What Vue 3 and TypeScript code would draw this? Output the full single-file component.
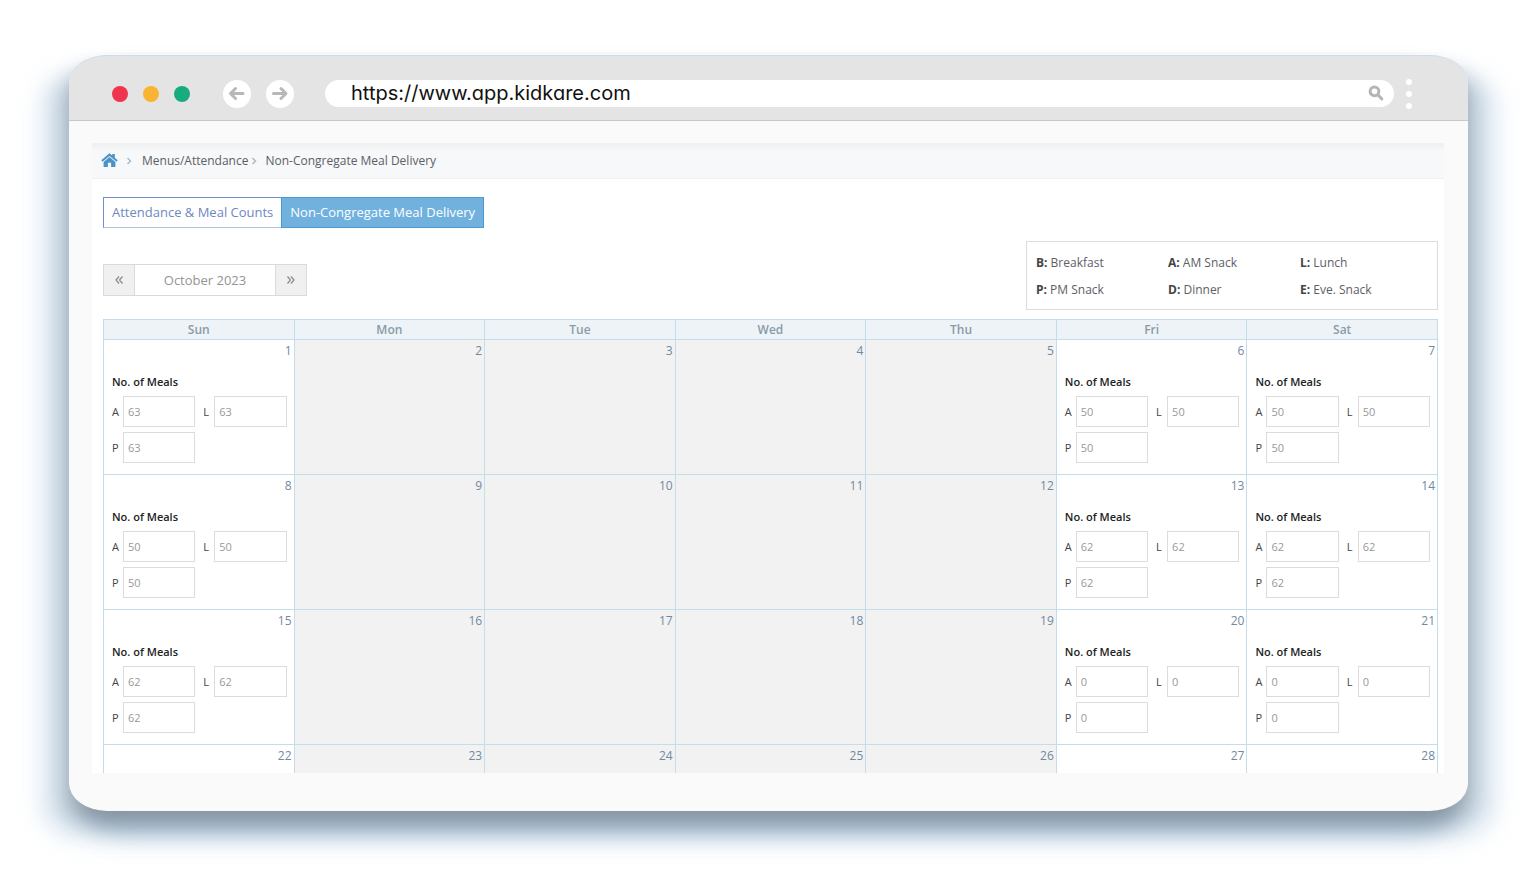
<script setup lang="ts">
import { ref } from 'vue'

interface Field {
  code: string
  value: string
}

interface Day {
  date: number
  closed: boolean
  fields: Field[]
}

const weekdays = ['Sun', 'Mon', 'Tue', 'Wed', 'Thu', 'Fri', 'Sat']

const legend = [
  { code: 'B:', name: 'Breakfast' },
  { code: 'A:', name: 'AM Snack' },
  { code: 'L:', name: 'Lunch' },
  { code: 'P:', name: 'PM Snack' },
  { code: 'D:', name: 'Dinner' },
  { code: 'E:', name: 'Eve. Snack' },
]

const counts: Record<number, string> = {
  1: '63', 6: '50', 7: '50',
  8: '50', 13: '62', 14: '62',
  15: '62', 20: '0', 21: '0',
}

const weeks = ref<Day[][]>(
  [1, 8, 15, 22].map((start) =>
    weekdays.map((_, i) => {
      const date = start + i
      const count = counts[date]
      return {
        date,
        closed: i > 0 && i < 5,
        fields: count === undefined ? [] : ['A', 'L', 'P'].map((code) => ({ code, value: count })),
      }
    }),
  ),
)

const address = ref('https://www.app.kidkare.com')
</script>

<template>
  <div class="stage">
    <div class="window">
      <header class="chrome">
        <div class="lights">
          <span class="light red"></span>
          <span class="light amber"></span>
          <span class="light green"></span>
        </div>
        <div class="history">
          <button type="button" class="round" aria-label="Back">
            <svg viewBox="0 0 28 28" width="28" height="28"><path d="M20 13.500H8M12.500 8.500L7.500 13.500L12.500 18.500" /></svg>
          </button>
          <button type="button" class="round" aria-label="Forward">
            <svg viewBox="0 0 28 28" width="28" height="28"><path d="M7.500 13.500H19.500M15 8.500L20 13.500L15 18.500" /></svg>
          </button>
        </div>
        <div class="address">
          <input v-model="address" type="text" aria-label="Address" />
          <button type="button" class="search" aria-label="Search">
            <svg viewBox="0 0 18 18" width="18" height="18">
              <circle cx="7.500" cy="6.300" r="4.400" fill="none" stroke="#b5b5b5" stroke-width="3" />
              <path d="M11 10L14.800 13.900" stroke="#b5b5b5" stroke-width="3" stroke-linecap="round" />
            </svg>
          </button>
        </div>
        <button type="button" class="more" aria-label="More">
          <span></span><span></span><span></span>
        </button>
      </header>

      <main class="body">
        <div class="panel">
          <nav class="crumbs" aria-label="Breadcrumb">
            <a href="#" class="home" aria-label="Home">
              <svg viewBox="0 0 17 15" width="17" height="15">
                <path d="M0.300 7.300L8.500 0.300L11.200 2.500V1H13.800V4.700L16.700 7.300L15.500 8.800L8.500 3L1.500 8.800Z" />
                <path d="M2.600 8.900L8.500 4L14.400 8.900V14H10.100V9.800H6.900V14H2.600Z" />
              </svg>
            </a>
            <svg class="sep" viewBox="0 0 6 8" width="6" height="8"><path d="M1.500 1L4.500 4L1.500 7" /></svg>
            <a href="#" class="parent">Menus/Attendance</a>
            <svg class="sep" viewBox="0 0 6 8" width="6" height="8"><path d="M1.500 1L4.500 4L1.500 7" /></svg>
            <span class="current">Non-Congregate Meal Delivery</span>
          </nav>

          <div class="content">
            <div class="tabs">
              <button type="button" class="tab">Attendance &amp; Meal Counts</button>
              <button type="button" class="tab active">Non-Congregate Meal Delivery</button>
            </div>

            <div class="tools">
              <div class="month">
                <button type="button" aria-label="Previous month">
                  <svg viewBox="0 0 10 10" width="10" height="10"><path d="M5 1.500L2 5L5 8.500M8.500 1.500L5.500 5L8.500 8.500" /></svg>
                </button>
                <span>October 2023</span>
                <button type="button" aria-label="Next month">
                  <svg viewBox="0 0 10 10" width="10" height="10"><path d="M1.500 1.500L4.500 5L1.500 8.500M5 1.500L8 5L5 8.500" /></svg>
                </button>
              </div>
              <div class="legend">
                <span v-for="item in legend" :key="item.code"><b>{{ item.code }}</b> {{ item.name }}</span>
              </div>
            </div>

            <table class="calendar">
              <thead>
                <tr>
                  <th v-for="name in weekdays" :key="name" scope="col">{{ name }}</th>
                </tr>
              </thead>
              <tbody>
                <tr v-for="(week, w) in weeks" :key="w">
                  <td v-for="day in week" :key="day.date" :class="{ closed: day.closed }">
                    <div class="date">{{ day.date }}</div>
                    <div v-if="day.fields.length" class="meals">
                      <div class="title">No. of Meals</div>
                      <div class="fields">
                        <label v-for="field in day.fields" :key="field.code">
                          <span>{{ field.code }}</span>
                          <input v-model="field.value" type="text" inputmode="numeric" />
                        </label>
                      </div>
                    </div>
                  </td>
                </tr>
              </tbody>
            </table>
          </div>
        </div>
      </main>
    </div>
  </div>
</template>

<style>
body {
  margin: 0;
  background: #fff;
}
</style>

<style scoped>
.stage {
  padding: 55px 68px 81px 69px;
  overflow: hidden;
  font-family: "Open Sans", "Noto Sans", sans-serif;
  font-size: 12px;
  line-height: 18px;
  color: #5c6064;
}
.stage * {
  box-sizing: border-box;
}
button,
input {
  margin: 0;
  padding: 0;
  border: 0;
  background: none;
  font: inherit;
  color: inherit;
}
button {
  cursor: pointer;
}
svg {
  display: block;
}
.window {
  border-radius: 38px / 28px;
  background: #fafafa;
  box-shadow:
    0 14px 20px -2px rgba(85, 75, 90, 0.34),
    -14px 18px 20px 0 rgba(100, 140, 155, 0.26),
    14px 18px 20px 0 rgba(100, 140, 155, 0.26),
    -22px 22px 22px 8px rgba(150, 185, 220, 0.26),
    22px 22px 22px 8px rgba(150, 185, 220, 0.26);
}
.chrome {
  display: flex;
  align-items: center;
  height: 66px;
  padding: 11px 56px 0 43px;
  border-radius: 38px 38px 0 0 / 28px 28px 0 0;
  border-top: 1px solid #cddce7;
  border-bottom: 1px solid #c6c9cc;
  background: #e4e4e4;
}
.lights {
  display: flex;
  gap: 15px;
}
.light {
  width: 16px;
  height: 16px;
  border-radius: 50%;
}
.red { background: #f0344c; }
.amber { background: #f8b432; }
.green { background: #17ab80; }
.history {
  display: flex;
  gap: 15px;
  margin-left: 33px;
}
.round {
  width: 28px;
  height: 28px;
  border-radius: 50%;
  background: #fff;
}
.round path {
  fill: none;
  stroke: #b7b9b9;
  stroke-width: 3;
  stroke-linecap: round;
  stroke-linejoin: round;
}
.address {
  display: flex;
  flex: 1;
  align-items: center;
  height: 27px;
  margin-left: 31px;
  padding: 0 9px 0 26px;
  border-radius: 14px;
  background: #fff;
}
.address input {
  flex: 1;
  min-width: 0;
  height: 27px;
  padding-bottom: 2px;
  font-family: Inter, "Open Sans", sans-serif;
  font-size: 20px;
  font-weight: 400;
  font-feature-settings: "cv11";
  color: #111;
}
.more {
  display: flex;
  flex-direction: column;
  align-items: center;
  gap: 6px;
  width: 6px;
  margin-left: 12px;
}
.more span {
  width: 6px;
  height: 6px;
  border-radius: 50%;
  background: #fff;
}
.body {
  padding: 22px 24px 38px 23px;
}
.panel {
  background: #fff;
}
.crumbs {
  display: flex;
  align-items: center;
  height: 36px;
  padding: 0 9px;
  border-bottom: 1px solid #eef1f3;
  background: linear-gradient(#eeefef, #f6f8fa 8px);
}
.crumbs a {
  color: inherit;
  text-decoration: none;
}
.home path {
  fill: #4b93c6;
}
.sep {
  margin: 0 10px 0 8px;
}
.parent + .sep {
  margin: 0 8px 0 3px;
}
.sep path {
  fill: none;
  stroke: #b4b9be;
  stroke-width: 1.500;
}
.content {
  padding: 18px 6px 0 11px;
}
.tabs {
  display: flex;
  font-size: 13px;
}
.tab {
  height: 31px;
  padding: 0 8px 2px;
  border: 1px solid #6e8fc9;
  border-bottom-color: #b0c4e4;
  border-right: 0;
  color: #6f87bf;
}
.tab.active {
  border: 1px solid #4a9bd0;
  background: #70b1de;
  color: #fff;
}
.tools {
  display: flex;
  justify-content: space-between;
  align-items: flex-start;
  gap: 24px;
  margin-top: 13px;
}
.month {
  display: flex;
  align-items: center;
  width: 204px;
  height: 32px;
  margin-top: 23px;
  border: 1px solid #dadada;
  font-size: 13px;
  color: #949494;
}
.month button {
  display: grid;
  place-items: center;
  width: 31px;
  height: 30px;
  border-right: 1px solid #dadada;
  background: #f0f0f0;
}
.month button:last-child {
  border-right: 0;
  border-left: 1px solid #dadada;
}
.month path {
  fill: none;
  stroke: #888;
  stroke-width: 1.200;
}
.month span {
  flex: 1;
  text-align: center;
}
.legend {
  display: grid;
  grid-template-columns: repeat(3, 1fr);
  row-gap: 9px;
  width: 412px;
  padding: 12px 5px 10px 9px;
  border: 1px solid #dcdcdc;
}
.legend b {
  font-weight: 700;
  color: #444;
}
.calendar {
  width: 100%;
  margin-top: 9px;
  border-collapse: collapse;
  table-layout: fixed;
}
.calendar th,
.calendar td {
  padding: 0;
  border: 1px solid #c5dcea;
}
.calendar th {
  height: 20px;
  background: #edf3f6;
  font-weight: 600;
  line-height: 18px;
  color: #8a9ba8;
}
.calendar td {
  height: 135px;
  vertical-align: top;
}
.calendar tbody tr:last-child td {
  height: 28px;
  border-bottom: 0;
}
.closed {
  background: #f2f2f2;
}
.date {
  padding: 2px 2px 0 0;
  text-align: right;
  color: #7189a0;
}
.meals {
  padding: 13px 7px 0 8px;
}
.title {
  font-size: 11px;
  font-weight: 600;
  color: #222;
}
.fields {
  display: grid;
  grid-template-columns: 1fr 1fr;
  gap: 5px 8px;
  margin-top: 5px;
}
.fields label {
  display: flex;
  align-items: center;
  font-size: 11px;
  color: #444;
}
.fields span {
  flex: none;
  width: 11px;
}
.fields input {
  flex: 1;
  min-width: 0;
  width: 100%;
  height: 31px;
  padding: 0 4px;
  border: 1px solid #dcdcdc;
  background: #fff;
  color: #999;
}
</style>
